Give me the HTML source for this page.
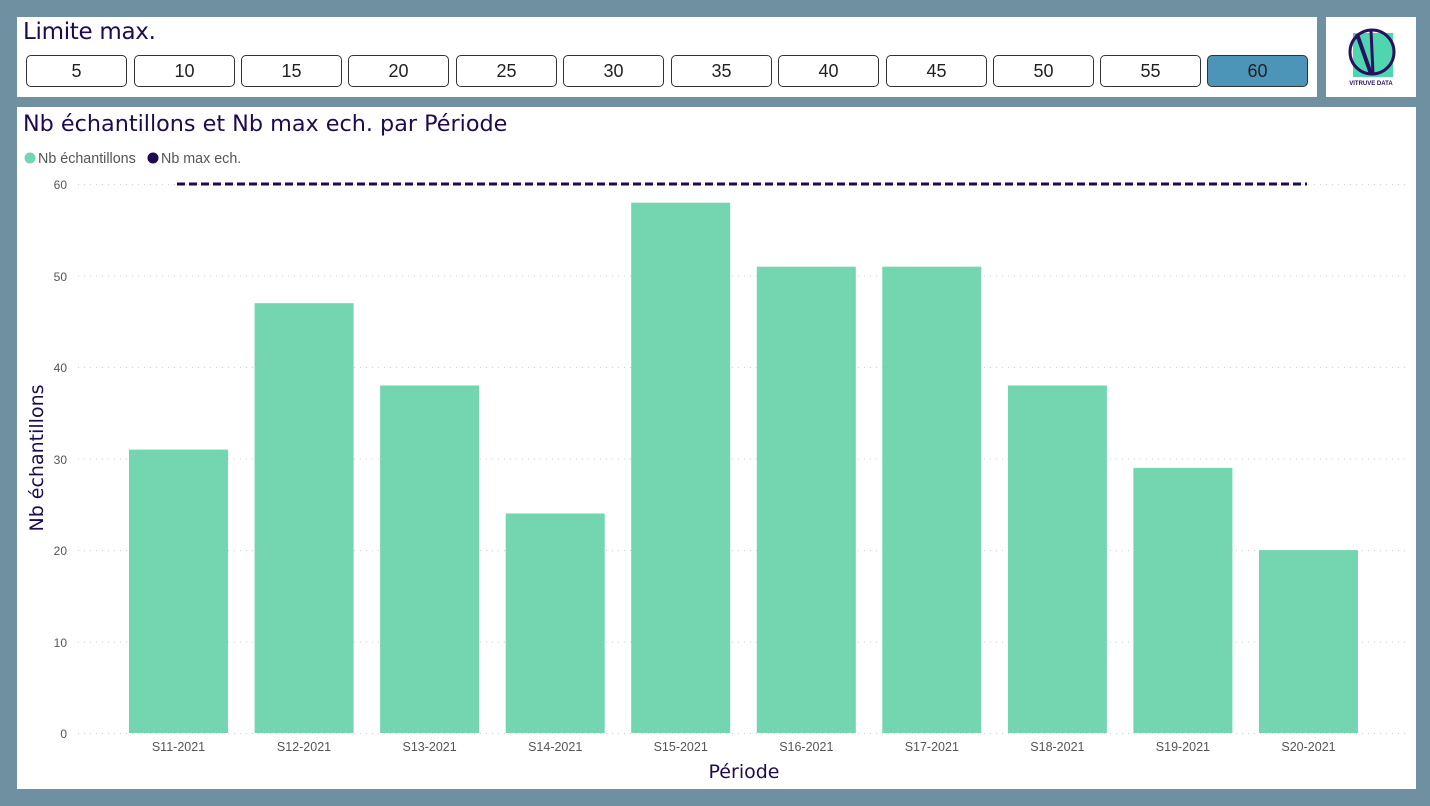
<!DOCTYPE html>
<html><head><meta charset="utf-8"><style>
body{margin:0;width:1430px;height:806px;background:#6f90a1;position:relative;overflow:hidden;font-family:"Liberation Sans","DejaVu Sans",sans-serif}
.p{position:absolute;background:#fff}
.btn{position:absolute;top:55px;width:99px;height:30px;border:1px solid #333;border-radius:5px;background:#fff;font-size:18px;color:#222;text-align:center;line-height:31px;box-sizing:content-box}
</style></head><body>
<div class="p" style="left:17px;top:17px;width:1300px;height:80px"></div>
<div style="position:absolute;left:23px;top:19px;font-size:23px;color:#1f0a4f;font-family:'DejaVu Sans',sans-serif;letter-spacing:-0.3px">Limite max.</div>
<div class="btn" style="left:26px">5</div>
<div class="btn" style="left:134px">10</div>
<div class="btn" style="left:241px">15</div>
<div class="btn" style="left:348px">20</div>
<div class="btn" style="left:456px">25</div>
<div class="btn" style="left:563px">30</div>
<div class="btn" style="left:671px">35</div>
<div class="btn" style="left:778px">40</div>
<div class="btn" style="left:886px">45</div>
<div class="btn" style="left:993px">50</div>
<div class="btn" style="left:1100px">55</div>
<div class="btn" style="left:1207px;background:#4d95b8">60</div>
<div class="p" style="left:1326px;top:17px;width:90px;height:80px">
<svg width="90" height="80" viewBox="0 0 90 80">
<rect x="27" y="16" width="40" height="44" fill="#4fd6ae"/>
<circle cx="46" cy="35" r="22" fill="none" stroke="#2a1060" stroke-width="3"/>
<line x1="31" y1="17" x2="45" y2="57" stroke="#2a1060" stroke-width="4"/>
<line x1="45" y1="13" x2="47" y2="57" stroke="#2a1060" stroke-width="3"/>
<text x="45" y="68" font-size="6" font-weight="bold" text-anchor="middle" fill="#2a1060">VITRUVE DATA</text>
</svg></div>
<div class="p" style="left:17px;top:107px;width:1399px;height:682px"></div>
<svg style="position:absolute;left:0;top:0" width="1430" height="806">
<text x="23" y="131" font-size="22.3" fill="#1f0a4f" font-family="DejaVu Sans,sans-serif">Nb échantillons et Nb max ech. par Période</text>
<circle cx="30" cy="158" r="5.5" fill="#73d6b1"/>
<text x="38" y="163" font-size="14.3" fill="#555">Nb échantillons</text>
<circle cx="153" cy="158" r="5.5" fill="#1f0a4f"/>
<text x="161" y="163" font-size="14.3" fill="#555">Nb max ech.</text>
<g stroke="#ccc" stroke-width="1" stroke-dasharray="1 5">
<line x1="78" y1="184.5" x2="1405" y2="184.5"/><line x1="78" y1="276" x2="1405" y2="276"/>
<line x1="78" y1="367.5" x2="1405" y2="367.5"/><line x1="78" y1="459" x2="1405" y2="459"/>
<line x1="78" y1="550.5" x2="1405" y2="550.5"/><line x1="78" y1="642" x2="1405" y2="642"/>
<line x1="78" y1="733.5" x2="1405" y2="733.5"/></g>
<g font-size="12" fill="#555" text-anchor="end">
<text x="67" y="189">60</text><text x="67" y="281">50</text><text x="67" y="372">40</text>
<text x="67" y="464">30</text><text x="67" y="555">20</text><text x="67" y="647">10</text><text x="67" y="738">0</text></g>
<g fill="#73d6b1">
<rect x="129" y="449.6" width="99" height="283.4"/>
<rect x="254.6" y="303.2" width="99" height="429.8"/>
<rect x="380.1" y="385.5" width="99" height="347.5"/>
<rect x="505.7" y="513.5" width="99" height="219.5"/>
<rect x="631.2" y="202.7" width="99" height="530.3"/>
<rect x="756.8" y="266.7" width="99" height="466.3"/>
<rect x="882.3" y="266.7" width="99" height="466.3"/>
<rect x="1007.9" y="385.5" width="99" height="347.5"/>
<rect x="1133.4" y="467.9" width="99" height="265.1"/>
<rect x="1259" y="550.1" width="99" height="182.9"/></g>
<line x1="177" y1="184" x2="1307" y2="184" stroke="#1f0a4f" stroke-width="3" stroke-dasharray="8 4"/>
<g font-size="12.5" fill="#555" text-anchor="middle">
<text x="178.5" y="751">S11-2021</text><text x="304" y="751">S12-2021</text><text x="429.6" y="751">S13-2021</text>
<text x="555.2" y="751">S14-2021</text><text x="680.7" y="751">S15-2021</text><text x="806.3" y="751">S16-2021</text>
<text x="931.8" y="751">S17-2021</text><text x="1057.4" y="751">S18-2021</text><text x="1182.9" y="751">S19-2021</text>
<text x="1308.5" y="751">S20-2021</text></g>
<text x="744" y="778" font-size="19" fill="#1f0a4f" text-anchor="middle" font-family="DejaVu Sans,sans-serif">Période</text>
<text transform="translate(43,458) rotate(-90)" font-size="19" fill="#1f0a4f" text-anchor="middle" font-family="DejaVu Sans,sans-serif">Nb échantillons</text>
</svg>
</body></html>
